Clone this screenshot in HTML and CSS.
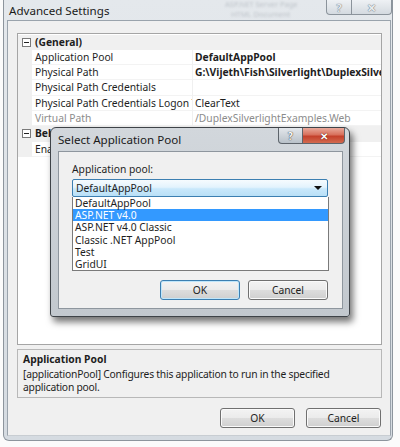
FILE: index.html
```html
<!DOCTYPE html>
<html lang="en">
<head>
    <meta charset="utf-8" />
    <title>Advanced Settings</title>
    <link rel="stylesheet" href="styles.css">
</head>
<body>

    <main class="window">
        <header class="titlebar">
            <span class="title">Advanced Settings</span>
            <span class="glass-text glass-text-1">ASP.NET Server Page</span>
            <span class="glass-text glass-text-2">HTML Document</span>
            <div class="caption caption-inactive">
                <span class="cap-btn cap-help">?</span>
                <span class="cap-btn cap-close">&#x2715;</span>
            </div>
        </header>

        <section class="client">
            <div class="grid">
                <div class="row category">
                    <span class="margin"><i class="expander"></i></span>
                    <span class="label">(General)</span>
                </div>
                <div class="row">
                    <span class="margin"></span>
                    <span class="label">Application Pool</span>
                    <span class="value bold">DefaultAppPool</span>
                </div>
                <div class="row">
                    <span class="margin"></span>
                    <span class="label">Physical Path</span>
                    <span class="value bold">G:\Vijeth\Fish\Silverlight\DuplexSilverlightExamples.Web</span>
                </div>
                <div class="row">
                    <span class="margin"></span>
                    <span class="label">Physical Path Credentials</span>
                    <span class="value"></span>
                </div>
                <div class="row">
                    <span class="margin"></span>
                    <span class="label">Physical Path Credentials Logon Type</span>
                    <span class="value">ClearText</span>
                </div>
                <div class="row readonly">
                    <span class="margin"></span>
                    <span class="label">Virtual Path</span>
                    <span class="value">/DuplexSilverlightExamples.Web</span>
                </div>
                <div class="row category">
                    <span class="margin"><i class="expander"></i></span>
                    <span class="label">Behavior</span>
                </div>
                <div class="row">
                    <span class="margin"></span>
                    <span class="label">Enabled Protocols</span>
                    <span class="value">http</span>
                </div>
            </div>

            <div class="description">
                <h4>Application Pool</h4>
                <p>[applicationPool] Configures this application to run in the specified application pool.</p>
            </div>

            <div class="actions outer-actions">
                <button class="btn">OK</button>
                <button class="btn">Cancel</button>
            </div>
        </section>

        <!-- modal on top of the settings window -->
        <section class="dialog">
            <header class="dialog-title">
                <span>Select Application Pool</span>
                <div class="caption">
                    <span class="cap-btn cap-help">?</span>
                    <span class="cap-btn cap-close cap-red">&#x2715;</span>
                </div>
            </header>
            <div class="dialog-client">
                <label class="pool-label">Application pool:</label>
                <div class="combo">
                    <span>DefaultAppPool</span>
                    <span class="arrow"></span>
                </div>
                <ul class="pool-list">
                    <li>DefaultAppPool</li>
                    <li class="selected">ASP.NET v4.0</li>
                    <li>ASP.NET v4.0 Classic</li>
                    <li>Classic .NET AppPool</li>
                    <li>Test</li>
                    <li>GridUI</li>
                </ul>
                <div class="actions dialog-actions">
                    <button class="btn btn-default">OK</button>
                    <button class="btn">Cancel</button>
                </div>
            </div>
        </section>
    </main>

</body>
</html>
```

FILE: styles.css
```css
* {
    box-sizing: border-box;
}

body {
    margin: 0;
    background: #fbfbfb;
    font-family: "Noto Sans", "Open Sans", sans-serif;
    font-size: 10.3px;
    color: #1e1e1e;
}

.window {
    position: relative;
    margin-left: 3px;
    width: 390px;
    height: 441px;
    display: flex;
    flex-direction: column;
    padding: 0 1px 4px 3px;
    background: linear-gradient(#e4e8ec, #d5dbe1);
    border: 1px solid #8d959d;
    border-top: none;
    border-radius: 0 0 6px 6px;
}

/* title bar */

.titlebar {
    position: relative;
    height: 20px;
    display: flex;
    align-items: center;
    padding-left: 2px;
}

.title {
    font-size: 11.6px;
    color: #1a1a1a;
}

.glass-text {
    position: absolute;
    font-size: 7.5px;
    line-height: 9px;
    white-space: nowrap;
    color: rgba(90, 100, 110, 0.28);
    filter: blur(0.9px);
}

.glass-text-1 {
    left: 218px;
    top: 0;
}

.glass-text-2 {
    left: 224px;
    top: 10px;
}

.caption {
    position: absolute;
    right: -1px;
    top: 0;
    display: flex;
}

.cap-btn {
    height: 15px;
    display: flex;
    align-items: center;
    justify-content: center;
    font-weight: bold;
    color: #fff;
    border: 1px solid #8b939b;
    border-top: none;
    background: linear-gradient(#eef1f4, #d4dae0);
}

.caption-inactive .cap-btn {
    color: #e9ecef;
    text-shadow: 0 0 1px #6c757d, 0 0 1px #6c757d;
    font-size: 11px;
}

.caption-inactive .cap-help {
    width: 26px;
    border-radius: 0 0 0 4px;
}

.caption-inactive .cap-close {
    width: 40px;
    border-left: none;
    border-radius: 0 0 4px 0;
}

/* client area */

.client {
    flex: 1;
    display: flex;
    flex-direction: column;
    padding: 12px 8px 0 9px;
    background: #f0f0f0;
    border: 1px solid #9aa3ac;
    border-bottom-color: #c8cdd2;
}

.grid {
    height: 312px;
    background: #fff;
    border: 1px solid #a5a5a5;
    padding-top: 0.5px;
}

.row {
    display: flex;
    height: 15.3px;
    line-height: 15px;
    white-space: nowrap;
}

.margin {
    width: 14px;
    flex: none;
    background: #f0f0f0;
    display: flex;
    align-items: center;
    justify-content: center;
}

.label {
    width: 161px;
    flex: none;
    overflow: hidden;
    padding-left: 3px;
    border-bottom: 1px solid #f3f3f3;
    border-right: 1px solid #f0f0f0;
}

.value {
    flex: 1;
    overflow: hidden;
    padding-left: 2px;
    border-bottom: 1px solid #f3f3f3;
}

.bold,
.category .label {
    font-weight: bold;
}

.category {
    background: #f0f0f0;
}

.category .label {
    border: none;
    width: auto;
}

.readonly {
    color: #8c8c8c;
}

.expander {
    position: relative;
    width: 9px;
    height: 9px;
    margin-left: 3px;
    border: 1px solid #7a7a7a;
    background: #fff;
}

.expander::after {
    content: "";
    position: absolute;
    left: 1px;
    right: 1px;
    top: 3px;
    height: 1px;
    background: #222;
}

.description {
    height: 49px;
    margin-top: 4px;
    padding: 2px 5px;
    border: 1px solid #b8b8b8;
    background: #f0f0f0;
}

.description h4 {
    margin: 0;
    font-size: 10.3px;
    line-height: 14px;
}

.description p {
    margin: 2px 0 0;
    line-height: 13px;
    letter-spacing: -0.22px;
}

.actions {
    display: flex;
    justify-content: flex-end;
}

.outer-actions {
    margin-top: 10px;
    gap: 11px;
    padding-right: 1px;
}

.outer-actions .btn {
    width: 75px;
}

.btn {
    height: 20px;
    padding: 0;
    font-family: inherit;
    font-size: 10.3px;
    color: #1e1e1e;
    border: 1px solid #707070;
    border-radius: 3px;
    background: linear-gradient(#f3f3f3 0%, #ebebeb 48%, #dddddd 52%, #cfcfcf 100%);
    box-shadow: inset 0 0 0 1px #fafafa;
}

.btn-default {
    border-color: #3c7fb1;
    box-shadow: inset 0 0 0 1px #bfe6fb;
}

/* select application pool dialog */

.dialog {
    position: absolute;
    left: 46px;
    top: 127px;
    width: 300px;
    height: 190px;
    display: flex;
    flex-direction: column;
    padding: 0 6px 7px 7px;
    background: linear-gradient(#d2d7dc, #c2c8ce);
    border: 1px solid #3e4348;
    border-radius: 6px 6px 3px 3px;
    box-shadow: 3px 5px 7px rgba(0, 0, 0, 0.55);
}

.dialog-title {
    position: relative;
    height: 23px;
    display: flex;
    align-items: center;
    font-size: 11.6px;
    color: #1a1a1a;
}

.dialog-title .caption {
    right: -2px;
}

.dialog-title .cap-btn {
    height: 16px;
    border-color: #5d646b;
    font-size: 10px;
}

.dialog-title .cap-help {
    width: 25px;
    color: #fff;
    text-shadow: 0 0 1px #333, 0 0 1px #333;
    border-radius: 0 0 0 4px;
    background: linear-gradient(#e3e7eb, #b9c1c9);
}

.cap-red {
    width: 42px;
    border-left: none;
    border-radius: 0 0 4px 0;
    background: linear-gradient(#e9a99b 0%, #d8705c 45%, #c4402b 55%, #d26a4f 100%);
    text-shadow: 0 0 1px #6a1b10, 0 0 1px #6a1b10;
}

.dialog-client {
    flex: 1;
    display: flex;
    flex-direction: column;
    padding: 10px 14px 0 13px;
    background: #f0f0f0;
    border: 1px solid #8e969e;
}

.pool-label {
    line-height: 14px;
    margin-bottom: 3px;
}

.combo {
    height: 18px;
    display: flex;
    align-items: center;
    justify-content: space-between;
    padding: 0 5px 0 3px;
    border: 1px solid #3c7fb1;
    border-radius: 2px;
    background: linear-gradient(#f6fbfe, #e3f3fd 45%, #c9e8fb 55%, #b9e0f7);
}

.arrow {
    width: 0;
    height: 0;
    border-left: 4px solid transparent;
    border-right: 4px solid transparent;
    border-top: 4px solid #111;
}

.pool-list {
    list-style: none;
    margin: 0 -1px 0 0;
    padding: 0;
    height: 74px;
    background: #fff;
    border: 1px solid #7a7a7a;
    border-top: none;
}

.pool-list li {
    height: 12.2px;
    line-height: 12px;
    padding-left: 2px;
}

.pool-list .selected {
    background: #3399ff;
    color: #fff;
}

.dialog-actions {
    margin-top: 9px;
    gap: 8px;
}

.dialog-actions .btn {
    width: 80px;
}
```
